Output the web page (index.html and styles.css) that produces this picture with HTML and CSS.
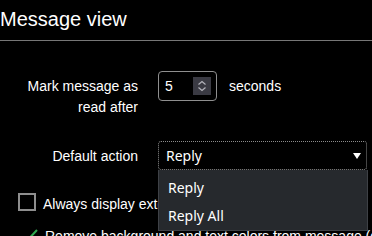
FILE: index.html
```html
<!DOCTYPE html>
<html lang="en">

<head>
    <meta charset="UTF-8">
    <title>Message view</title>
    <link rel="stylesheet" href="styles.css">
</head>

<body>
    <h1 class=title>Message view</h1>
    <hr class=rule>
    <div class=form>
        <div class=row>
            <label class=lbl>Mark message as<br>read after</label>
            <div class=ctl>
                <div class=num>
                    <span class=num-val>5</span>
                    <span class=spin>
                        <svg width="18" height="18" viewBox="0 0 18 18">
                            <path d="M5.5 7.5 9 4.5 12.5 7.5M5.5 10.5 9 13.5 12.5 10.5" fill="none" stroke="#b4b4bc" stroke-width="1.2"/>
                        </svg>
                    </span>
                </div>
                <span class=unit>seconds</span>
            </div>
        </div>
        <div class="row row-select">
            <label class=lbl>Default action</label>
            <div class="ctl dropdown">
                <div class=select>
                    <span>Reply</span>
                    <svg class=arrow width="8" height="6" viewBox="0 0 8 6">
                        <path d="M0 0H8L4 6Z" fill="#fff"/>
                    </svg>
                </div>
                <ul class=menu>
                    <li>Reply</li>
                    <li>Reply All</li>
                </ul>
            </div>
        </div>
        <div class="check-row first">
            <span class=box></span>
            <span class=check-text>Always display external content</span>
        </div>
        <div class=check-row>
            <svg class=tick width="20" height="18" viewBox="0 0 20 18">
                <path d="M1 11 6 16 19 2" fill="none" stroke="#2fa84f" stroke-width="2"/>
            </svg>
            <span class=check-text>Remove background and text colors from message (dark mode)</span>
        </div>
    </div>
</body>

</html>
```

FILE: styles.css
```css
* {
    margin: 0;
    padding: 0;
    border: 0;
}

body {
    background-color: black;
    color: white;
    font-family: "Liberation Sans", Arial, sans-serif;
    font-size: 14px;
    overflow: hidden;
}

.title {
    font-size: 20px;
    font-weight: normal;
    line-height: 24px;
    margin-top: 7px;
}

.rule {
    margin-top: 9px;
    border-top: 1px solid #777777;
}

.form {
    padding-left: 18px;
}

.row {
    display: flex;
    align-items: baseline;
    gap: 20px;
    margin-top: 30px;
}

.row-select {
    margin-top: 23px;
}

.lbl {
    width: 120px;
    text-align: right;
    line-height: 21px;
}

.ctl {
    display: flex;
    align-items: baseline;
}

.num {
    display: flex;
    align-items: baseline;
    justify-content: space-between;
    width: 59px;
    height: 30px;
    box-sizing: border-box;
    border: 1px solid #8f8f8f;
    border-radius: 4px;
    padding: 0 5px 0 6px;
    line-height: 28px;
}

.spin {
    display: block;
    align-self: center;
    width: 18px;
    height: 18px;
    background-color: #3a3a43;
}

.spin svg {
    display: block;
}

.unit {
    margin-left: 12px;
}

.dropdown {
    position: relative;
}

.select {
    display: flex;
    align-items: baseline;
    justify-content: space-between;
    width: 209px;
    height: 29px;
    box-sizing: border-box;
    border: 1px dotted #8c8c8c;
    border-radius: 3px;
    padding: 0 5px 0 7px;
    font-family: "Noto Sans", sans-serif;
    line-height: 27px;
}

.arrow {
    align-self: center;
}

.menu {
    position: absolute;
    top: 100%;
    left: 0;
    width: 210px;
    box-sizing: border-box;
    list-style: none;
    background-color: #26292d;
    border: 1px solid #3e4146;
    border-top: 0;
    padding: 4px 0 0;
    font-family: "Noto Sans", sans-serif;
    line-height: 28px;
    z-index: 2;
}

.menu li {
    padding-left: 9px;
}

.check-row {
    display: flex;
    align-items: flex-start;
    gap: 7px;
    margin-top: 11px;
    white-space: nowrap;
}

.check-row.first {
    margin-top: 23px;
}

.box {
    width: 18px;
    height: 18px;
    box-sizing: border-box;
    border: 2px solid #8e8e8e;
    flex: none;
}

.check-text {
    line-height: 20px;
    margin-top: 1px;
}

.tick {
    flex: none;
    margin-top: 3px;
}
```
